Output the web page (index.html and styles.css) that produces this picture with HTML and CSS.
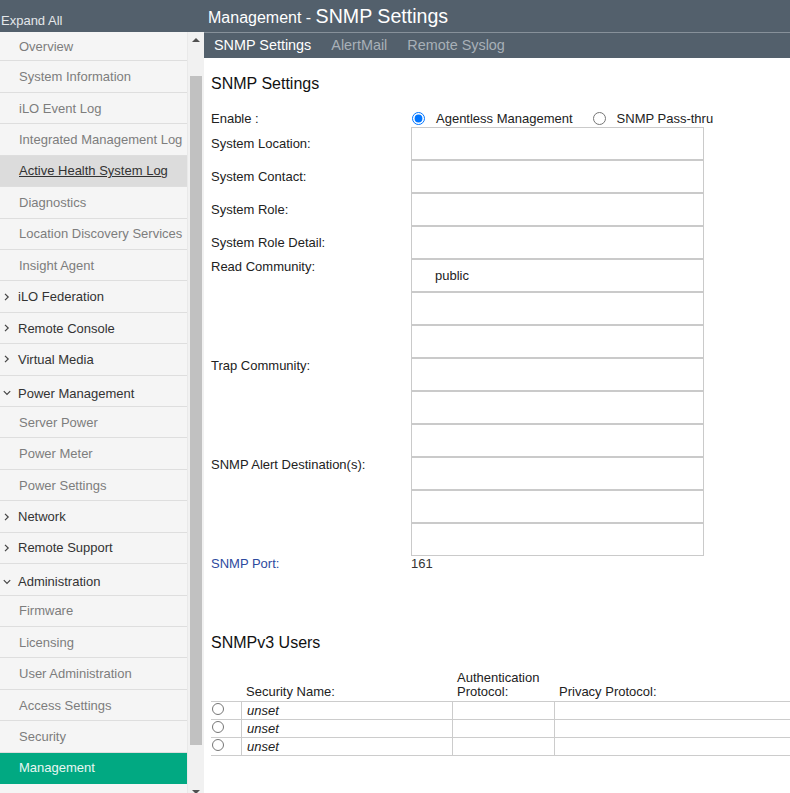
FILE: index.html
```html
<!DOCTYPE html>
<html lang="en">
<head>
<meta charset="utf-8">
<title>Management - SNMP Settings</title>
<link rel="stylesheet" href="styles.css">
</head>
<body>
<div class="app">
  <header class="topbar">
    <div class="expand">Expand All</div>
    <div class="title"><span class="t-sec">Management - </span><span class="t-page">SNMP Settings</span></div>
  </header>
  <div class="layout">
    <nav class="sidebar">
      <ul class="nav">
        <li class="first"><span>Overview</span></li>
        <li><span>System Information</span></li>
        <li><span>iLO Event Log</span></li>
        <li><span>Integrated Management Log</span></li>
        <li class="current"><span>Active Health System Log</span></li>
        <li><span>Diagnostics</span></li>
        <li><span>Location Discovery Services</span></li>
        <li><span>Insight Agent</span></li>
        <li class="group"><span class="chev"><svg width="6" height="8" viewBox="0 0 6 8"><polyline points="1,0.8 4.2,4 1,7.2" fill="none" stroke="#444" stroke-width="1.2"/></svg></span><span>iLO Federation</span></li>
        <li class="group"><span class="chev"><svg width="6" height="8" viewBox="0 0 6 8"><polyline points="1,0.8 4.2,4 1,7.2" fill="none" stroke="#444" stroke-width="1.2"/></svg></span><span>Remote Console</span></li>
        <li class="group"><span class="chev"><svg width="6" height="8" viewBox="0 0 6 8"><polyline points="1,0.8 4.2,4 1,7.2" fill="none" stroke="#444" stroke-width="1.2"/></svg></span><span>Virtual Media</span></li>
        <li class="group open"><span class="chev"><svg width="8" height="6" viewBox="0 0 8 6"><polyline points="0.8,1.2 4,4.4 7.2,1.2" fill="none" stroke="#444" stroke-width="1.2"/></svg></span><span>Power Management</span></li>
        <li><span>Server Power</span></li>
        <li><span>Power Meter</span></li>
        <li><span>Power Settings</span></li>
        <li class="group"><span class="chev"><svg width="6" height="8" viewBox="0 0 6 8"><polyline points="1,0.8 4.2,4 1,7.2" fill="none" stroke="#444" stroke-width="1.2"/></svg></span><span>Network</span></li>
        <li class="group"><span class="chev"><svg width="6" height="8" viewBox="0 0 6 8"><polyline points="1,0.8 4.2,4 1,7.2" fill="none" stroke="#444" stroke-width="1.2"/></svg></span><span>Remote Support</span></li>
        <li class="group open"><span class="chev"><svg width="8" height="6" viewBox="0 0 8 6"><polyline points="0.8,1.2 4,4.4 7.2,1.2" fill="none" stroke="#444" stroke-width="1.2"/></svg></span><span>Administration</span></li>
        <li><span>Firmware</span></li>
        <li><span>Licensing</span></li>
        <li><span>User Administration</span></li>
        <li><span>Access Settings</span></li>
        <li><span>Security</span></li>
        <li class="active"><span>Management</span></li>
        <li class="blank"></li>
      </ul>
    </nav>
    <div class="scrollbar">
      <div class="sb-top"><span class="arrow-up"></span></div>
      <div class="thumb"></div>
      <div class="sb-bottom"><span class="arrow-down"></span></div>
    </div>
    <main class="main">
      <div class="tabs">
        <span class="tab on">SNMP Settings</span>
        <span class="tab">AlertMail</span>
        <span class="tab">Remote Syslog</span>
      </div>
      <section class="content">
        <h2 class="section">SNMP Settings</h2>
        <div class="form">
          <div class="lbl enable-lbl">Enable :</div>
          <div class="radios">
            <label class="opt"><input type="radio" name="mode" checked>Agentless Management</label>
            <label class="opt opt2"><input type="radio" name="mode">SNMP Pass-thru</label>
          </div>

          <div class="lbl mid">System Location:</div>
          <div class="stack"><input type="text" class="field"></div>

          <div class="lbl mid">System Contact:</div>
          <div class="stack"><input type="text" class="field"></div>

          <div class="lbl mid">System Role:</div>
          <div class="stack"><input type="text" class="field"></div>

          <div class="lbl mid">System Role Detail:</div>
          <div class="stack"><input type="text" class="field"></div>

          <div class="lbl top">Read Community:</div>
          <div class="stack">
            <input type="text" class="field" value="public">
            <input type="text" class="field">
            <input type="text" class="field">
          </div>

          <div class="lbl top">Trap Community:</div>
          <div class="stack">
            <input type="text" class="field">
            <input type="text" class="field">
            <input type="text" class="field">
          </div>

          <div class="lbl top">SNMP Alert Destination(s):</div>
          <div class="stack">
            <input type="text" class="field">
            <input type="text" class="field">
            <input type="text" class="field">
          </div>

          <div class="lbl port-lbl">SNMP Port:</div>
          <div class="lbl port-val">161</div>
        </div>

        <h2 class="section v3">SNMPv3 Users</h2>
        <table class="users">
          <colgroup>
            <col class="c-sel"><col class="c-name"><col class="c-auth"><col class="c-priv">
          </colgroup>
          <thead>
            <tr><th></th><th>Security Name:</th><th>Authentication Protocol:</th><th>Privacy Protocol:</th></tr>
          </thead>
          <tbody>
            <tr><td class="sel"><input type="radio" name="user"></td><td class="unset">unset</td><td></td><td></td></tr>
            <tr><td class="sel"><input type="radio" name="user"></td><td class="unset">unset</td><td></td><td></td></tr>
            <tr><td class="sel"><input type="radio" name="user"></td><td class="unset">unset</td><td></td><td></td></tr>
          </tbody>
        </table>
      </section>
    </main>
  </div>
</div>
</body>
</html>
```
FILE: styles.css
```css
html, body {
  margin: 0;
  padding: 0;
  height: 100%;
  overflow: hidden;
}
body {
  font-family: "Liberation Sans", Arial, sans-serif;
  font-size: 13px;
  color: #222;
  background: #fff;
}
.app {
  width: 790px;
  height: 800px;
}

/* top bar */
.topbar {
  display: flex;
  height: 32px;
  background: #53606c;
}
.expand {
  width: 204px;
  box-sizing: border-box;
  padding: 13px 0 0 1px;
  color: #e4e7ea;
  font-size: 13px;
  line-height: 15px;
}
.title {
  padding: 5px 0 0 4px;
  color: #fff;
  font-size: 16px;
  line-height: 22px;
  white-space: nowrap;
}
.t-page {
  font-size: 19.6px;
}

/* layout */
.layout {
  display: flex;
  height: 768px;
}

/* sidebar */
.sidebar {
  width: 187px;
  flex: none;
  background: #f5f5f5;
  border-right: 1px solid #e9e9e9;
  overflow: hidden;
}
.nav {
  list-style: none;
  margin: 0;
  padding: 0;
}
.nav li {
  height: 31.43px;
  box-sizing: border-box;
  border-bottom: 1px solid #dedede;
  display: flex;
  align-items: center;
  padding-left: 19px;
  color: #7d7d7d;
  white-space: nowrap;
}
.nav li.first {
  height: 29.43px;
}
.nav li.group {
  color: #333;
  padding-left: 4px;
}
.nav li.group .chev {
  width: 14px;
  display: flex;
  align-items: center;
}
.nav li.open {
  padding-left: 3px;
  padding-top: 5px;
}
.nav li.open .chev {
  width: 15px;
}
.nav li.current {
  background: #dcdcdc;
  color: #333;
}
.nav li.current span {
  text-decoration: underline;
}
.nav li.active {
  background: #01a982;
  color: #e8f7f2;
  border-bottom-color: #01a982;
}
.nav li.blank {
  border-bottom: none;
}

/* scrollbar */
.scrollbar {
  width: 16px;
  flex: none;
  background: #f1f1f1;
  display: flex;
  flex-direction: column;
  align-items: center;
}
.sb-top {
  height: 44px;
  width: 16px;
  display: flex;
  justify-content: center;
  padding-top: 6px;
  box-sizing: border-box;
}
.arrow-up {
  width: 0;
  height: 0;
  border-left: 4px solid transparent;
  border-right: 4px solid transparent;
  border-bottom: 4px solid #505050;
}
.thumb {
  width: 12px;
  height: 669px;
  background: #c1c1c1;
}
.sb-bottom {
  width: 16px;
  height: 55px;
  display: flex;
  justify-content: center;
  align-items: flex-end;
  padding-bottom: 6px;
  box-sizing: border-box;
}
.arrow-down {
  width: 0;
  height: 0;
  border-left: 4px solid transparent;
  border-right: 4px solid transparent;
  border-top: 4px solid #505050;
}

/* main */
.main {
  flex: 1;
  min-width: 0;
  overflow: hidden;
  background: #fff;
}
.tabs {
  display: flex;
  height: 25px;
  background: #53606c;
  border-top: 1px solid #87919a;
}
.tab {
  padding: 0 10px;
  line-height: 25px;
  font-size: 14.4px;
  color: #a8b0b8;
  white-space: nowrap;
}
.tab.on {
  color: #fff;
}
.content {
  padding: 17px 0 0 7px;
}
.section {
  margin: 0;
  font-size: 16px;
  font-weight: normal;
  line-height: 18px;
  color: #111;
}

/* form */
.form {
  margin-top: 17px;
  display: grid;
  grid-template-columns: 200px 293px;
}
.lbl {
  line-height: 15px;
  white-space: nowrap;
}
.lbl.mid {
  align-self: center;
}
.lbl.top {
  align-self: start;
}
.enable-lbl {
  line-height: 17px;
}
.radios {
  display: flex;
  align-items: center;
  height: 17px;
  white-space: nowrap;
}
.opt {
  display: flex;
  align-items: center;
}
.opt input {
  margin: 0 11px 0 1px;
  width: 13px;
  height: 13px;
}
.opt2 {
  margin-left: 19px;
}
.stack {
  display: flex;
  flex-direction: column;
}
.field {
  display: block;
  width: 293px;
  height: 33px;
  box-sizing: border-box;
  margin: 0;
  border: 1px solid #cacaca;
  padding: 0 0 0 23px;
  font-family: "Liberation Sans", Arial, sans-serif;
  font-size: 13px;
  color: #222;
  background: #fff;
  outline: none;
}
.port-lbl {
  color: #2d4a9e;
}
.port-val {
  color: #333;
}

/* SNMPv3 users */
.v3 {
  margin-top: 63px;
}
.users {
  margin-top: 19px;
  table-layout: fixed;
  width: 643px;
  border-collapse: separate;
  border-spacing: 0;
}
.c-sel { width: 30px; }
.c-name { width: 211px; }
.c-auth { width: 102px; }
.c-priv { width: 300px; }
.users th {
  font-weight: normal;
  text-align: left;
  vertical-align: bottom;
  line-height: 14px;
  padding: 0 0 2px 5px;
  border-bottom: 1px solid #cccccc;
  color: #222;
}
.users td {
  height: 17px;
  padding: 0 0 0 5px;
  line-height: 17px;
  border-bottom: 1px solid #cccccc;
  vertical-align: top;
}
.users td + td {
  border-left: 1px solid #cccccc;
}
.users td.sel {
  padding-left: 1px;
}
.users td.sel input {
  margin: 1px 0 0 0;
  width: 12px;
  height: 12px;
  vertical-align: top;
}
.users td.unset {
  font-style: italic;
  color: #222;
}
```
